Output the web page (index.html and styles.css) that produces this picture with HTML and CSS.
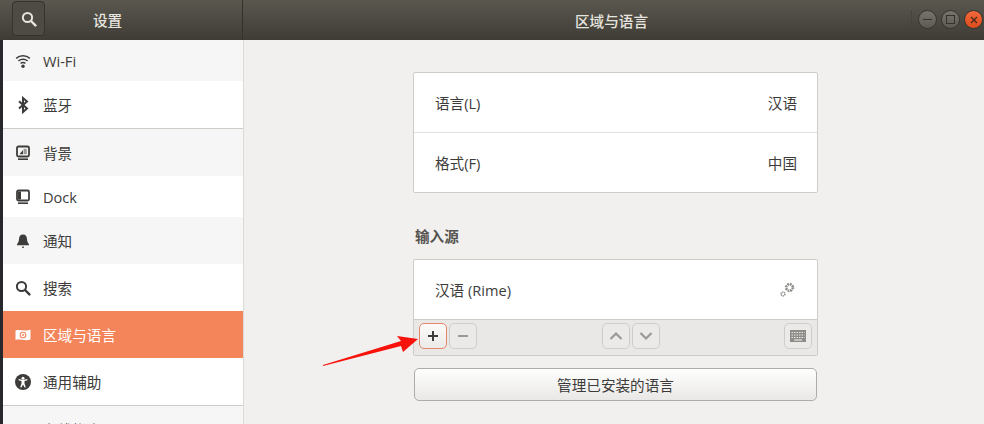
FILE: index.html
```html
<!DOCTYPE html>
<html lang="zh">

<head>
	<meta charset="UTF-8">
	<title>区域与语言</title>
	<link rel="stylesheet" href="styles.css">
</head>

<body>
	<div class="window">
		<header class="titlebar">
			<div class="titlebar-left">
				<button class="search-btn" type="button">
					<svg width="16" height="16" viewBox="0 0 16 16">
						<circle cx="6.5" cy="6.5" r="4.6" fill="none" stroke="#e6e4df" stroke-width="2" />
						<path d="M10 10l4.4 4.4" stroke="#e6e4df" stroke-width="2.4" stroke-linecap="round" />
					</svg>
				</button>
				<span class="titlebar-name">设置</span>
			</div>
			<div class="titlebar-main">
				<span class="titlebar-title">区域与语言</span>
				<div class="controls">
					<span class="ctl ctl-grey"><i class="ctl-min"></i></span>
					<span class="ctl ctl-grey"><i class="ctl-max"></i></span>
					<span class="ctl ctl-close">
						<svg width="10" height="10" viewBox="0 0 10 10">
							<path d="M2 2l6 6M8 2l-6 6" stroke="#4a2a1a" stroke-width="1.4" />
						</svg>
					</span>
				</div>
			</div>
		</header>

		<div class="main">
			<div class="desk-strip"></div>
			<nav class="sidebar">
				<div class="item item-short alt">
					<svg class="icon" width="16" height="16" viewBox="0 0 16 16" fill="none" stroke="#3d3c3a">
						<path d="M1.2 5.4C5 2 11 2 14.8 5.4" stroke-width="1.5" />
						<path d="M3.4 8C6 5.8 10 5.8 12.6 8" stroke-width="1.5" />
						<path d="M5.6 10.4C7 9.4 9 9.4 10.4 10.4" stroke-width="1.4" />
						<circle cx="8" cy="13.2" r="1.7" fill="#3d3c3a" stroke="none" />
					</svg>
					<span>Wi-Fi</span>
				</div>
				<div class="item">
					<svg class="icon" width="16" height="18" viewBox="0 0 16 18" fill="none" stroke="#3d3c3a" stroke-width="2">
						<path d="M4 5.2l8 7.2-4 3.6V2l4 3.4-8 7.2" />
					</svg>
					<span>蓝牙</span>
				</div>
				<div class="divider"></div>
				<div class="item alt">
					<svg class="icon" width="16" height="16" viewBox="0 0 16 16">
						<rect x="2" y="1.5" width="12" height="10" rx="1.5" fill="none" stroke="#3d3c3a" stroke-width="1.8" />
						<path d="M4.5 9.2L8 5v4.2z" fill="#3d3c3a" />
						<rect x="8.6" y="3.8" width="3.2" height="5.4" fill="#9a9995" />
						<rect x="3" y="13.4" width="10" height="1.6" fill="#3d3c3a" />
					</svg>
					<span>背景</span>
				</div>
				<div class="item item-short">
					<svg class="icon" width="16" height="16" viewBox="0 0 16 16">
						<rect x="2" y="1.5" width="12" height="10" rx="1.5" fill="none" stroke="#3d3c3a" stroke-width="1.8" />
						<rect x="3" y="2.5" width="3" height="8" fill="#3d3c3a" />
						<rect x="3" y="13.4" width="10" height="1.6" fill="#3d3c3a" />
					</svg>
					<span>Dock</span>
				</div>
				<div class="item alt">
					<svg class="icon" width="16" height="16" viewBox="0 0 16 16">
						<path d="M8 1.5c2.8 0 3.8 2 4 4.6.1 2 .6 3.7 2 5.1v1H2v-1c1.4-1.4 1.9-3.100 2-5.100C4.200 3.500 5.200 1.500 8 1.500z" fill="#3d3c3a" />
						<rect x="7" y="13.600" width="2" height="1.200" fill="#3d3c3a" />
					</svg>
					<span>通知</span>
				</div>
				<div class="item">
					<svg class="icon" width="16" height="16" viewBox="0 0 16 16">
						<circle cx="6.500" cy="6.500" r="4.600" fill="none" stroke="#3d3c3a" stroke-width="2" />
						<path d="M10 10l4.400 4.400" stroke="#3d3c3a" stroke-width="2.400" stroke-linecap="round" />
					</svg>
					<span>搜索</span>
				</div>
				<div class="item active">
					<svg class="icon" width="16" height="14" viewBox="0 0 16 14">
						<path d="M0.500 2.500C5 1 10 4 15.500 1.500v10C10 13.500 5 10.500 0.500 12z" fill="#fff" />
						<circle cx="8" cy="7" r="2.800" fill="none" stroke="#f4845a" stroke-width="1.100" />
						<circle cx="8" cy="7" r="1" fill="#f4845a" />
					</svg>
					<span>区域与语言</span>
				</div>
				<div class="item">
					<svg class="icon" width="16" height="16" viewBox="0 0 16 16">
						<circle cx="8" cy="8" r="8" fill="#3d3c3a" />
						<circle cx="8" cy="4.200" r="1.500" fill="#fff" />
						<path d="M3.500 6.200L6.500 7v2.500L5.200 13.200l1.200.4L8 10.400l1.600 3.200 1.200-.4-1.300-3.700V7l3-.8-.3-1.100L8 6 3.800 5.100z" fill="#fff" />
					</svg>
					<span>通用辅助</span>
				</div>
				<div class="divider"></div>
				<div class="item alt">
					<svg class="icon" width="16" height="16" viewBox="0 0 16 16">
						<path d="M5 2l8 6-3 1 2 4-2 1-2-4-3 2z" fill="#3d3c3a" />
					</svg>
					<span>在线帐户</span>
				</div>
			</nav>

			<section class="content">
				<div class="column">
					<div class="frame">
						<div class="row">
							<span>语言(L)</span>
							<span>汉语</span>
						</div>
						<div class="row row-line">
							<span>格式(F)</span>
							<span>中国</span>
						</div>
					</div>

					<h2 class="section-title">输入源</h2>

					<div class="frame frame-sources">
						<div class="row">
							<span>汉语 (Rime)</span>
							<svg width="18" height="18" viewBox="0 0 18 18" fill="none" stroke="#8d8c88">
								<circle cx="10.500" cy="6.500" r="3.200" stroke-width="2.200" stroke-dasharray="1.800 0.700" />
								<circle cx="10.500" cy="6.500" r="4.300" stroke-width="1" stroke-dasharray="1.500 1.900" />
								<circle cx="4" cy="13" r="1.900" stroke-width="1.500" stroke-dasharray="1.200 0.600" />
							</svg>
						</div>
						<div class="toolbar">
							<div class="tool-group">
								<button class="tool tool-focus" type="button">
									<svg width="12" height="12" viewBox="0 0 12 12">
										<path d="M6 1v10M1 6h10" stroke="#3d3c3a" stroke-width="2" />
									</svg>
								</button>
								<button class="tool" type="button">
									<svg width="12" height="12" viewBox="0 0 12 12">
										<path d="M1 6h10" stroke="#9a9995" stroke-width="2" />
									</svg>
								</button>
							</div>
							<div class="tool-group">
								<button class="tool" type="button">
									<svg width="14" height="10" viewBox="0 0 14 10" fill="none">
										<path d="M1.500 8L7 2.500 12.500 8" stroke="#9a9995" stroke-width="2.200" />
									</svg>
								</button>
								<button class="tool" type="button">
									<svg width="14" height="10" viewBox="0 0 14 10" fill="none">
										<path d="M1.500 2L7 7.500 12.500 2" stroke="#9a9995" stroke-width="2.200" />
									</svg>
								</button>
							</div>
							<button class="tool" type="button">
								<svg width="16" height="12" viewBox="0 0 16 12">
									<rect width="16" height="12" fill="#8d8c88" />
									<path d="M1.500 2.500h13M1.500 5h13M1.500 7.500h13" stroke="#e9e8e6" stroke-width="1" stroke-dasharray="1.500 1" />
									<path d="M4 10h8" stroke="#e9e8e6" stroke-width="1.200" />
								</svg>
							</button>
						</div>
					</div>

					<button class="manage-btn" type="button">管理已安装的语言</button>
				</div>
			</section>
		</div>

		<svg class="arrow" width="100" height="34" viewBox="0 0 100 34">
			<polygon points="3,31 81,7 77,2 98,5 83,18 81,12 3,32" fill="#f8120c" />
		</svg>
	</div>
</body>

</html>
```

FILE: styles.css
```css
html,
body {
	margin: 0;
	height: 424px;
	overflow: hidden;
}

body {
	background-color: #2b2b2b;
	color: #3d3c3a;
	font-family: "Open Sans", "Noto Sans CJK SC", sans-serif;
	font-size: 14.6px;
}

.window {
	position: relative;
	height: 424px;
	display: flex;
	flex-direction: column;
}

/* title bar */
.titlebar {
	height: 40px;
	flex: none;
	display: flex;
	background: linear-gradient(#5a574f, #3e3c35);
	color: #e6e4df;
}

.titlebar-left {
	width: 243px;
	flex: none;
	box-sizing: border-box;
	padding-left: 12px;
	display: flex;
	align-items: flex-start;
	border-right: 1px solid #34322d;
}

.search-btn {
	width: 33px;
	height: 35px;
	margin-top: 1px;
	padding: 0;
	display: flex;
	align-items: center;
	justify-content: center;
	background: #4d4b44;
	border: 1px solid #35332e;
	border-radius: 4px;
}

.titlebar-name {
	margin-left: 48px;
	line-height: 40px;
	font-weight: 500;
}

.titlebar-main {
	flex: 1;
	position: relative;
	display: flex;
	align-items: center;
	justify-content: center;
}

.titlebar-title {
	font-weight: 500;
	margin-right: 4px;
}

.controls {
	position: absolute;
	top: 10px;
	right: 1px;
	height: 20px;
	padding-left: 6px;
	display: flex;
	gap: 4px;
	border-left: 1px solid #46443d;
}

.ctl {
	width: 17px;
	height: 17px;
	border-radius: 50%;
	display: flex;
	align-items: center;
	justify-content: center;
	border: 0.5px solid #37352f;
}

.ctl-grey {
	background: linear-gradient(#76746c, #5c5a53);
}

.ctl-close {
	background: linear-gradient(#f2683a, #dd4d1e);
}

.ctl-min {
	width: 9px;
	height: 1px;
	background: #34322d;
}

.ctl-max {
	width: 7px;
	height: 7px;
	border: 1px solid #34322d;
}

/* sidebar */
.main {
	flex: 1;
	display: flex;
	min-height: 0;
}

.desk-strip {
	width: 3px;
	flex: none;
	background: #26282b;
}

.sidebar {
	width: 240px;
	flex: none;
	background-color: #fff;
	border-right: 1px solid #dcdad6;
	overflow: hidden;
}

.item {
	height: 47px;
	display: flex;
	align-items: center;
	padding-left: 12px;
	gap: 12px;
}

.item-short {
	height: 41px;
}

.item .icon {
	width: 16px;
	flex: none;
}

.alt {
	background-color: #f6f6f6;
}

.active {
	background-color: #f4845a;
	color: #fff;
}

.divider {
	height: 1px;
	background-color: #cfccc8;
}

/* content */
.content {
	flex: 1;
	background-color: #f1f0ee;
	display: flex;
	justify-content: center;
	padding-left: 3px;
}

.column {
	width: 405px;
	padding-top: 32px;
}

.frame {
	background-color: #fff;
	border: 1px solid #cfccc8;
	border-radius: 2px;
}

.row {
	height: 59px;
	display: flex;
	align-items: center;
	justify-content: space-between;
	padding: 0 20px 0 21px;
}

.row-line {
	height: 59px;
	border-top: 1px solid #e2e0dd;
}

.section-title {
	margin: 32px 0 12px 2px;
	font-size: 14.6px;
	line-height: 22px;
	font-weight: 700;
	color: #55534f;
}

.toolbar {
	height: 36px;
	box-sizing: border-box;
	padding: 3px 5px 0 5px;
	display: flex;
	justify-content: space-between;
	align-items: flex-start;
	background-color: #e9e8e6;
	border-top: 1px solid #cfccc8;
}

.tool-group {
	display: flex;
	gap: 2px;
}

.tool {
	width: 28px;
	height: 26px;
	padding: 0;
	display: flex;
	align-items: center;
	justify-content: center;
	background-color: #ebeae8;
	border: 1px solid #cfcdc9;
	border-radius: 5px;
}

.tool-focus {
	background: linear-gradient(#fbfbfa, #ebeae8);
	border-color: #e5876a;
}

.manage-btn {
	display: block;
	width: 403px;
	height: 33px;
	margin: 12px 0 0 1px;
	padding: 0;
	font: inherit;
	color: #3d3c3a;
	background: linear-gradient(#fefefe, #e9e8e6);
	border: 1px solid #aeaca7;
	border-radius: 5px;
}

/* red annotation drawn over the screenshot */
.arrow {
	position: absolute;
	left: 320px;
	top: 334px;
}
```
